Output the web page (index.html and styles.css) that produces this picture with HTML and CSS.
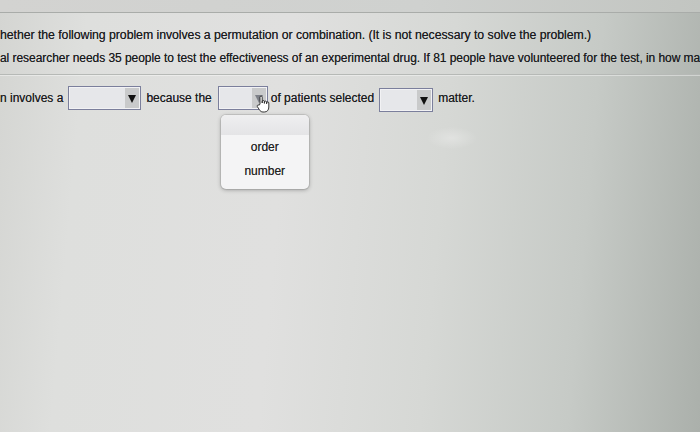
FILE: index.html
```html
<!DOCTYPE html>
<html>
<head>
<meta charset="utf-8">
<link rel="stylesheet" href="styles.css">
</head>
<body>
<div class="screen">
  <div class="topband"></div>
  <p class="line l1">hether the following problem involves a permutation or combination. (It is not necessary to solve the problem.)</p>
  <p class="line l2">al researcher needs 35 people to test the effectiveness of an experimental drug. If 81 people have volunteered for the test, in how ma</p>
  <div class="rule"></div>
  <div class="answer">
    <span class="txt">n involves a</span>
    <span class="sel s1"><span class="arrow"></span></span>
    <span class="txt">because the</span>
    <span class="sel s2"><span class="arrow dim"></span>
      <div class="menu">
        <div class="item blank"></div>
        <div class="item">order</div>
        <div class="item">number</div>
      </div>
      <svg class="hand" viewBox="0 0 14 18" width="14" height="18">
        <path d="M4 9 V2.2 a1.1 1.1 0 0 1 2.2 0 V8 V6.6 a1.1 1.1 0 0 1 2.2 0 V8.4 V7.2 a1.1 1.1 0 0 1 2.2 0 V8.8 V8 a1.1 1.1 0 0 1 2.2 0 V12 c0 3 -1.6 5 -4.5 5 H7 c-1.8 0 -2.6 -0.8 -3.6 -2.2 L1.3 11.5 a1.1 1.1 0 0 1 1.8 -1.2 Z" fill="#fff" stroke="#222" stroke-width="0.9" stroke-linejoin="round"/>
      </svg>
    </span>
    <span class="txt">of patients selected</span>
    <span class="sel s3"><span class="arrow"></span></span>
    <span class="txt">matter.</span>
  </div>
</div>
</body>
</html>
```
FILE: styles.css
```css
html, body {
  margin: 0;
  padding: 0;
}
body {
  width: 700px;
  height: 432px;
  overflow: hidden;
  font-family: "Liberation Sans", Arial, sans-serif;
  color: #1a1b1e;
}
.screen {
  width: 700px;
  height: 432px;
  overflow: hidden;
  background:
    radial-gradient(ellipse 36px 16px at 452px 138px, rgba(255,255,255,0.28), rgba(255,255,255,0) 70%),
    linear-gradient(95deg, #d4d5d2 0%, #dedfdd 12%, #e0e0df 40%, #d6d8d5 62%, #c6cac6 82%, #abb0ab 100%);
}
.topband {
  height: 12px;
  background: linear-gradient(90deg, #d3d3d1, #cfd1cf 60%, #c2c5c1);
  border-bottom: 1px solid #a9aca9;
}
.line {
  margin: 0;
  white-space: nowrap;
  line-height: 16px;
  text-shadow: 0 0 0.5px rgba(0,0,0,0.6);
}
.l1 {
  padding-top: 14px;
  font-size: 12.3px;
  letter-spacing: -0.05px;
}
.l2 {
  padding-top: 7px;
  font-size: 12px;
  letter-spacing: -0.05px;
}
.rule {
  margin-top: 8px;
  height: 1px;
  background: #b6b9b6;
  box-shadow: 0 1px 0 rgba(255,255,255,0.4);
}
.answer {
  display: flex;
  align-items: center;
  margin-top: 10px;
  height: 26px;
  font-size: 12px;
  text-shadow: 0 0 0.5px rgba(0,0,0,0.6);
}
.txt {
  white-space: nowrap;
}
.sel {
  position: relative;
  display: inline-block;
  height: 24px;
  box-sizing: border-box;
  border: 1px solid #7b7f9c;
  background: #e6e7ea;
  box-shadow: inset 0 0 0 1px #f2f2f4;
}
.s1 {
  width: 73px;
  margin: 0 5px 0 5px;
}
.s2 {
  width: 50px;
  margin: 0 3px 0 6px;
}
.s3 {
  width: 54px;
  margin: 3px 5px 0 5px;
}
.arrow {
  position: absolute;
  right: 1px;
  top: 1px;
  bottom: 1px;
  width: 14px;
  background: #c9cacb;
}
.arrow::after {
  content: "";
  position: absolute;
  left: 3px;
  top: 7px;
  border-left: 4px solid transparent;
  border-right: 4px solid transparent;
  border-top: 8px solid #111;
}
.arrow.dim::after {
  border-top-color: #7d8088;
}
.menu {
  position: absolute;
  left: 2px;
  top: 28px;
  width: 88px;
  height: 74px;
  background: #f4f4f5;
  border-radius: 5px;
  box-shadow: 0 1px 4px rgba(0,0,0,0.3), 0 0 0 1px rgba(0,0,0,0.08);
  overflow: hidden;
  z-index: 2;
  text-shadow: none;
}
.item {
  text-align: center;
  font-size: 12px;
  height: 24px;
  line-height: 24px;
  color: #222;
  text-shadow: 0 0 0.5px rgba(0,0,0,0.5);
}
.item.blank {
  height: 20px;
  background: linear-gradient(#efeff0, #e4e4e6);
}
.hand {
  position: absolute;
  left: 37px;
  top: 8px;
  z-index: 3;
}
```
